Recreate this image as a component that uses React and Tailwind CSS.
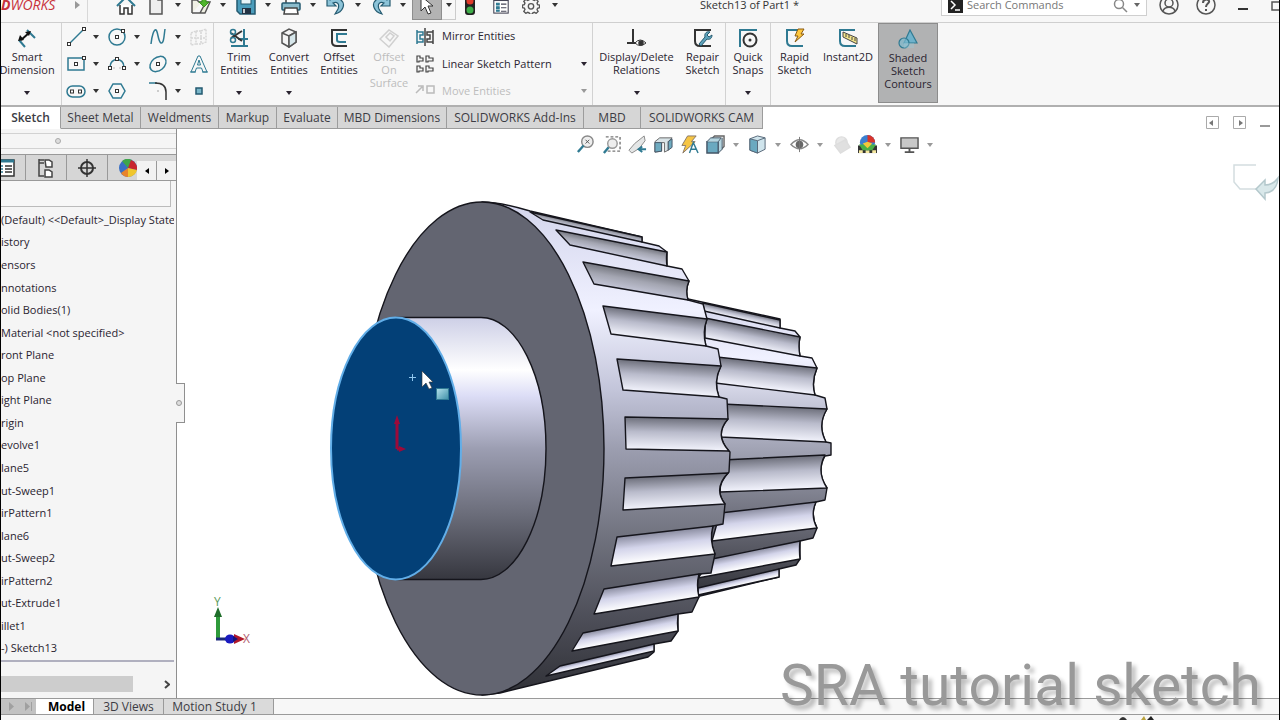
import clsx from "clsx";

const EDGE = "#15151c";
const TEAL = "#2f7a92";

// Small filled triangle used for every drop-down
function Caret({ label = "More options", className }) {
  return (
    <button type="button" aria-label={label} className={clsx("flex items-center justify-center", className)}>
      <svg width="6" height="4" viewBox="0 0 6 4" fill="currentColor">
        <path d="M0 0h6L3 4z" />
      </svg>
    </button>
  );
}

function Icon({ size = 20, children }) {
  return (
    <svg
      width={size}
      height={size}
      viewBox="0 0 20 20"
      fill="none"
      stroke={TEAL}
      strokeWidth="1.5"
      className="shrink-0"
      aria-hidden="true"
    >
      {children}
    </svg>
  );
}

// Square handle drawn on sketch points
function Node({ x, y }) {
  return <rect x={x - 1.5} y={y - 1.5} width="3" height="3" fill="#fff" stroke="#333" strokeWidth="1" />;
}

const quickIcons = {
  home: (
    <g stroke="#333">
      <path d="M4 10v9h4v-6h4v6h4v-9" fill="#fff" />
      <path d="M1 11l9-9 9 9" stroke={TEAL} strokeWidth="2" />
    </g>
  ),
  file: (
    <g stroke="#555">
      <path d="M4 1h9l3 3v15H4z" fill="#eee" />
      <path d="M12 1v4h4" />
    </g>
  ),
  open: (
    <g stroke="#555">
      <path d="M1 18V5h5l2 2h3M1 18h13l5-11h-4L9 18" fill="#f0f0e4" />
      <path d="M11 1h4v6h3l-5 5-5-5h3z" fill="#4fb52c" stroke="#3b8f20" strokeWidth="1" />
    </g>
  ),
  save: (
    <g>
      <path d="M1 2h18v17H4l-3-3z" fill="#4b9cbb" stroke="#245a70" />
      <rect x="5" y="2" width="10" height="7" fill="#e8f4f8" stroke="#245a70" strokeWidth="1" />
      <rect x="6" y="13" width="9" height="6" fill="#234" stroke="none" />
      <path d="M8 14v4" stroke="#fff" />
    </g>
  ),
  print: (
    <g stroke="#444">
      <path d="M5 8V1h10v7" fill="#fff" />
      <rect x="1" y="8" width="18" height="7" rx="1" fill="#8bbccc" stroke="#245a70" />
      <path d="M4 13h12l1 6H3z" fill="#fff" />
    </g>
  ),
  undo: (
    <path d="M1 2v9h9L7 8c4-2 7 1 5 6l-3 5c8-2 11-10 6-14-3-3-8-3-11 0z" fill="#8cc3d8" stroke="#245a70" strokeWidth="1.2" />
  ),
  redo: (
    <path d="M19 2v9h-9l3-3c-4-2-7 1-5 6l3 5C3 17 0 9 5 5c3-3 8-3 11 0z" fill="#8cc3d8" stroke="#245a70" strokeWidth="1.2" />
  ),
  light: (
    <g stroke="none">
      <rect x="5" y="0" width="10" height="20" rx="3" fill="#222" />
      <circle cx="10" cy="6" r="3.5" fill="#e03a2a" />
      <circle cx="10" cy="15" r="3.5" fill="#3fae49" />
    </g>
  ),
  list: (
    <g stroke="#445" strokeWidth="1.2">
      <rect x="2" y="1" width="16" height="18" fill="#fff" />
      <path d="M2 5h16" />
      <path d="M5 8h3v2H5zM5 12h3v2H5zM5 16h3v1H5z" fill={TEAL} stroke={TEAL} />
      <path d="M10 9h6M10 13h6M10 17h6" />
    </g>
  ),
  gear: (
    <g stroke="#555">
      <path d="M8.4 2h3.2l.5 2.2 1.6.7 2-1.2 2.2 2.3-1.2 1.9.6 1.6 2.2.5v3l-2.2.6-.6 1.5 1.2 2-2.2 2.2-2-1.2-1.6.6-.5 1.5H8.4l-.5-1.5-1.6-.6-2 1.2L2 17l1.300-2-.7-1.500L.5 13v-3l2.100-.5.7-1.600L2 6l2.300-2.300 2 1.200 1.600-.7z" />
      <circle cx="10" cy="11.500" r="3" />
    </g>
  ),
};

const sketchTools = [
  {
    name: "Line",
    menu: true,
    art: (
      <>
        <path d="M3 17L17 3" />
        <Node x={3} y={17} />
        <Node x={18} y={2} />
      </>
    ),
  },
  {
    name: "Circle",
    menu: true,
    art: (
      <>
        <circle cx="10" cy="10" r="8" />
        <Node x={10} y={10} />
        <Node x={16} y={4} />
      </>
    ),
  },
  { name: "Spline", menu: true, art: <path d="M3 17C4 8 6 2 8 3s2 12 5 13 3-8 4-14" /> },
  {
    name: "Plane",
    art: <path d="M2 6l5-2v13l-5 1zM7 4h5v13H7M12 4l5-2v13l-5 2M2 11h15" stroke="#d6d6d6" strokeDasharray="2 1" />,
  },
  {
    name: "Corner Rectangle",
    menu: true,
    art: (
      <>
        <rect x="2" y="4" width="16" height="12" />
        <Node x={10} y={10} />
        <Node x={18} y={4} />
      </>
    ),
  },
  {
    name: "Arc",
    menu: true,
    art: (
      <>
        <path d="M3 13c0-10 14-10 14 0" />
        <path d="M6 14h2M12 14h2" stroke="#bbb" strokeWidth="1" />
        <Node x={10} y={5} />
        <Node x={3} y={14} />
        <Node x={17} y={14} />
      </>
    ),
  },
  {
    name: "Ellipse",
    menu: true,
    art: (
      <>
        <ellipse cx="10" cy="10" rx="9" ry="6.500" transform="rotate(-40 10 10)" />
        <Node x={10} y={10} />
      </>
    ),
  },
  {
    name: "Sketch Text",
    art: <path d="M2 18L9 2h2l7 16h-4l-1.500-4h-5L6 18zM8.500 11h3L10 6zM1 18h6M13 18h6" strokeWidth="1" />,
  },
  {
    name: "Slot",
    menu: true,
    art: (
      <>
        <rect x="1" y="5" width="18" height="11" rx="5.500" />
        <Node x={6} y={10.5} />
        <Node x={14} y={10.5} />
      </>
    ),
  },
  {
    name: "Polygon",
    art: (
      <>
        <path d="M6 3h8l4 7-4 7H6l-4-7z" />
        <Node x={10} y={10} />
      </>
    ),
  },
  {
    name: "Fillet",
    menu: true,
    art: (
      <>
        <path d="M1 2h8" />
        <path d="M7 2c8 0 11 4 11 9v8" stroke="#333" />
        <path d="M9 9l2 2M11 9l-2 2" stroke="#ccc" strokeWidth="1" />
      </>
    ),
  },
  { name: "Point", art: <rect x="7" y="7" width="6" height="6" fill="#7ab6c9" stroke="#245a70" /> },
];

const bigIcons = {
  dimension: (
    <>
      <path d="M2 12l6 7M10 2l8 8" strokeWidth="2" />
      <path d="M4 12l8-7" stroke="#111" strokeWidth="2" />
      <path d="M1 13l2-6 4 5zM14 3l-6 1 4 4z" fill="#111" stroke="none" />
    </>
  ),
  trim: (
    <>
      <path d="M9 11h10M15 1v18" strokeWidth="2" />
      <path d="M2 5l11 8M2 10l11-7" stroke="#333" strokeWidth="2" />
      <circle cx="4" cy="4" r="2.500" />
      <circle cx="4" cy="12" r="2.500" />
      <path d="M2 18h17" strokeWidth="2" />
    </>
  ),
  convert: (
    <g stroke="#555">
      <path d="M3 5l7-4 7 3v10l-7 5-7-4z" fill="#f5f5f5" />
      <path d="M3 5l7 3 7-4M10 8v11" />
      <path d="M10 8l7-4v10l-7 5z" fill="#d6e6ea" />
    </g>
  ),
  offset: (
    <>
      <path d="M18 2H3v12q0 4 5 4h10" stroke="#333" strokeWidth="2" />
      <path d="M18 6H8v6q0 2 3 2h6" strokeWidth="2" />
    </>
  ),
  surface: (
    <g stroke="#d0d0d0">
      <path d="M1 11l9-9 9 6-9 11z" />
      <path d="M7 9l4-4 4 3-4 5z" />
    </g>
  ),
  relations: (
    <g stroke="#333">
      <path d="M6 1v14M0 15h10" strokeWidth="2" />
      <path d="M8 15q5-6 11 0-6 5-11 0z" fill="#fff" strokeWidth="1" />
      <circle cx="14" cy="15" r="2" fill="#333" />
    </g>
  ),
  repair: (
    <>
      <path d="M18 2H2v11q0 5 5 5h11" stroke="#333" strokeWidth="2" />
      <path d="M6 16l6-7c-1-4 2-6 5-5l-3 3 2 2 3-2c0 4-3 5-5 4l-6 7z" fill="#5fa3bb" stroke="#245a70" strokeWidth="1" />
    </>
  ),
  snaps: (
    <>
      <path d="M2 19V2h17" strokeWidth="2" />
      <circle cx="12" cy="12" r="6.500" stroke="#333" strokeWidth="2" />
      <circle cx="12" cy="12" r="1.500" fill="#333" stroke="none" />
    </>
  ),
  rapid: (
    <>
      <path d="M13 2H2v11q0 5 5 5h11" strokeWidth="2" />
      <path d="M13 1h6l-3 5h3l-9 8 3-6h-3z" fill="#ffc83d" stroke="#8a5a12" strokeWidth="1" />
    </>
  ),
  instant: (
    <>
      <path d="M17 2H2v11q0 5 5 5h11" strokeWidth="2" />
      <path d="M5 4l14 6v6L5 9z" fill="#f3e58a" stroke="#444" strokeWidth="1" />
      <path d="M8 6v3M11 7v3M14 9v3M17 10v3" stroke="#444" strokeWidth="1" />
    </>
  ),
  shaded: (
    <g strokeWidth="1.200">
      <path d="M12 1l7 13H6z" fill="#6fb2cb" />
      <circle cx="6" cy="14" r="5" fill="#7cb9cf" fillOpacity=".7" />
      <path d="M6 14h10v5H6z" fill="#9bc8d7" fillOpacity=".4" stroke="none" />
    </g>
  ),
};

function RibbonButton({ icon, lines, menu, disabled, className }) {
  return (
    <div className={clsx("flex shrink-0 flex-col items-center pt-[5px]", className, disabled ? "text-[#bdbdbd]" : "text-[#2a2430]")}>
      <button type="button" disabled={disabled} className="flex flex-col items-center gap-0.5 leading-[13px] whitespace-nowrap">
        <Icon>{bigIcons[icon]}</Icon>
        <span className="text-center">
          {lines.map((line) => (
            <span key={line} className="block">{line}</span>
          ))}
        </span>
      </button>
      {menu && <Caret label={`${lines.join(" ")} menu`} className="mt-auto h-6 w-4" />}
    </div>
  );
}

function Separator() {
  return <div className="w-px shrink-0 self-stretch bg-[#d2d2d2]" />;
}

function TitleBar() {
  const files = [
    ["file", "New"],
    ["open", "Open"],
    ["save", "Save"],
    ["print", "Print"],
    ["undo", "Undo"],
    ["redo", "Redo"],
  ];

  return (
    <header className="flex h-[23px] shrink-0 items-end overflow-hidden border-b border-[#cfcfcf] bg-[#f7f7f7] text-[11px] font-medium">
      <div className="flex h-[34px] w-full items-center">
        <div className="w-[67px] shrink-0 text-sm font-normal text-[#c8323c] italic">
          <b>D</b>WORKS
        </div>
        <div className="flex h-full w-5 shrink-0 items-center justify-center border-r border-[#d8d8d8]">
          <svg width="5" height="8" viewBox="0 0 5 8" fill="#999"><path d="M0 0v8l5-4z" /></svg>
        </div>
        <button type="button" aria-label="Home" className="ml-7 shrink-0">
          <Icon>{quickIcons.home}</Icon>
        </button>
        <div className="ml-2.5 flex shrink-0">
          {files.map(([key, label]) => (
            <div key={key} className="flex w-[45px] items-center gap-1">
              <button type="button" aria-label={label}><Icon>{quickIcons[key]}</Icon></button>
              <Caret label={`${label} menu`} className="w-4 text-[#333]" />
            </div>
          ))}
        </div>
        <div className="-ml-1 flex h-[30px] shrink-0">
          <button type="button" aria-label="Select" className="flex w-[30px] items-center justify-center border border-[#8e8e8e] bg-[#b3b3b3]">
            <svg width="14" height="20" viewBox="0 0 14 20" fill="#fff" stroke="#333">
              <path d="M1 1v15l4-4 3 7 3-1-3-7h5z" />
            </svg>
          </button>
          <Caret label="Select menu" className="w-3.5 border border-l-0 border-[#ccc] text-[#333]" />
        </div>
        <div className="ml-1 flex shrink-0 items-center gap-3">
          <button type="button" aria-label="Rebuild"><Icon>{quickIcons.light}</Icon></button>
          <button type="button" aria-label="File Properties"><Icon size={18}>{quickIcons.list}</Icon></button>
          <button type="button" aria-label="Options"><Icon size={18}>{quickIcons.gear}</Icon></button>
          <Caret label="Options menu" className="text-[#333]" />
        </div>
        <h1 className="flex-1 text-center whitespace-nowrap text-[#333]">Sketch13 of Part1 *</h1>
        <div className="flex h-[22px] w-[206px] shrink-0 items-center border border-[#cfcfcf] bg-white px-1.5">
          <svg width="15" height="15" viewBox="0 0 15 15" fill="none" stroke="#fff" strokeWidth="1.500">
            <path d="M0 0h15v15H0z" fill="#222" stroke="none" />
            <path d="M3 3l4 4-4 4M7 12h5" />
          </svg>
          <input
            type="search"
            aria-label="Search Commands"
            placeholder="Search Commands"
            className="ml-1 w-0 flex-1 bg-transparent placeholder:text-[#777]"
          />
          <button type="button" aria-label="Search">
            <svg width="15" height="15" viewBox="0 0 15 15" fill="none" stroke="#888" strokeWidth="1.500">
              <circle cx="6" cy="6" r="4.500" />
              <path d="M9.500 9.500L14 14" />
            </svg>
          </button>
          <Caret label="Search menu" className="ml-1.5 text-[#666]" />
        </div>
        <div className="ml-3 flex shrink-0 items-center gap-[17px]">
          <button type="button" aria-label="Login">
            <Icon><g stroke="#555"><circle cx="10" cy="10" r="9" /><circle cx="10" cy="8" r="4" /><path d="M4 16c2-5 10-5 12 0" /></g></Icon>
          </button>
          <button type="button" aria-label="Help">
            <Icon><g stroke="#555"><circle cx="10" cy="10" r="9" /><path d="M7 8c0-5 7-4 6-1-1 2-3 2-3 5M10 14v2" strokeWidth="2" /></g></Icon>
          </button>
          <button type="button" aria-label="Minimize">
            <Icon><path d="M5 14h10" stroke="#333" strokeWidth="2" /></Icon>
          </button>
        </div>
        <button type="button" aria-label="Maximize" className="ml-[18px] w-2 shrink-0 overflow-hidden">
          <svg width="14" height="14" viewBox="0 0 14 14" fill="none" stroke="#555" strokeWidth="1.500"><path d="M1 4h9v8H1z" /></svg>
        </button>
      </div>
    </header>
  );
}

function Ribbon() {
  return (
    <section
      aria-label="Sketch commands"
      className="flex h-[84px] shrink-0 overflow-hidden border-b-2 border-[#b0b0b0] bg-[#f7f7f7] text-[11px] font-medium"
    >
      <RibbonButton icon="dimension" lines={["Smart", "Dimension"]} menu className="-ml-2 w-[68px]" />
      <Separator />
      <div className="grid shrink-0 grid-cols-[41px_41px_41px_26px] grid-rows-3 pl-0.5">
        {sketchTools.map((tool) => (
          <div key={tool.name} className="flex items-center gap-1 pl-0.5">
            <button type="button" aria-label={tool.name}><Icon>{tool.art}</Icon></button>
            {tool.menu && <Caret label={`${tool.name} menu`} className="w-3 text-[#333]" />}
          </div>
        ))}
      </div>
      <Separator />
      <RibbonButton icon="trim" lines={["Trim", "Entities"]} menu className="w-[50px]" />
      <RibbonButton icon="convert" lines={["Convert", "Entities"]} menu className="w-[50px]" />
      <RibbonButton icon="offset" lines={["Offset", "Entities"]} className="w-[50px]" />
      <RibbonButton icon="surface" lines={["Offset", "On", "Surface"]} disabled className="w-[50px]" />
      <div className="grid w-[178px] shrink-0 grid-rows-3 pl-px text-[#2a2430]">
        <button type="button" className="flex items-center gap-[7px]">
          <Icon>
            <path d="M2 3v14M2 5h6v3H5v4h3v3H2" />
            <path d="M10 1v18M18 3v14M18 5h-6v3h3v4h-3v3h6" stroke="#444" />
          </Icon>
          Mirror Entities
        </button>
        <div className="flex items-center">
          <button type="button" className="flex flex-1 items-center gap-[7px]">
            <Icon>
              <g stroke="#444" strokeWidth="1.200">
                <path d="M2 2v6h2V7h4V4H5V2zM11 2v6h2V7h5V4h-4V2zM2 12v6h2v-1h4v-3H5v-2zM11 12v6h2v-1h5v-3h-4v-2z" />
              </g>
            </Icon>
            Linear Sketch Pattern
          </button>
          <Caret label="Linear Sketch Pattern menu" className="w-4" />
        </div>
        <div className="flex items-center text-[#bdbdbd]">
          <button type="button" disabled className="flex flex-1 items-center gap-[7px]">
            <Icon><g stroke="#bbb"><path d="M1 12l6-6M3 5h5v5M12 5h7v7h-7z" /></g></Icon>
            Move Entities
          </button>
          <Caret label="Move Entities menu" className="w-4 text-[#999]" />
        </div>
      </div>
      <Separator />
      <RibbonButton icon="relations" lines={["Display/Delete", "Relations"]} menu className="w-[87px]" />
      <RibbonButton icon="repair" lines={["Repair", "Sketch"]} className="w-[45px]" />
      <Separator />
      <RibbonButton icon="snaps" lines={["Quick", "Snaps"]} menu className="w-[44px]" />
      <Separator />
      <RibbonButton icon="rapid" lines={["Rapid", "Sketch"]} className="w-[47px]" />
      <RibbonButton icon="instant" lines={["Instant2D"]} className="w-[60px]" />
      <RibbonButton
        icon="shaded"
        lines={["Shaded", "Sketch", "Contours"]}
        className="mb-0.5 w-[60px] border border-[#8c8c8c] bg-[#b1b2b3]"
      />
    </section>
  );
}

const commandTabs = [
  ["Sketch", "w-[60px]"],
  ["Sheet Metal", "w-[80px]"],
  ["Weldments", "w-[78px]"],
  ["Markup", "w-[58px]"],
  ["Evaluate", "w-[61px]"],
  ["MBD Dimensions", "w-[109px]"],
  ["SOLIDWORKS Add-Ins", "w-[137px]"],
  ["MBD", "w-[57px]"],
  ["SOLIDWORKS CAM", "w-[122px]"],
];

function CommandTabs() {
  return (
    <div className="flex h-[22px] shrink-0 bg-white">
      <div role="tablist" className="flex text-[#3c3c44]">
        {commandTabs.map(([name, width], i) => (
          <button
            key={name}
            type="button"
            role="tab"
            aria-selected={i === 0}
            className={clsx(
              "border-r border-b border-[#9c9c9c] whitespace-nowrap",
              width,
              i === 0 ? "border-b-white bg-white font-semibold" : "bg-[#d6d6d6]"
            )}
          >
            {name}
          </button>
        ))}
      </div>
      <div className="mr-2 ml-auto flex items-center gap-3 pt-2">
        {["M8 5v6L4 8z", "M7 5v6l4-3z"].map((d, i) => (
          <button key={d} type="button" aria-label={i ? "Next pane" : "Previous pane"}>
            <svg width="15" height="15" viewBox="0 0 15 15" fill="none" stroke="#aaa">
              <path d="M1.500 1.500h12v12h-12z" />
              <path d={d} fill="#777" stroke="none" />
            </svg>
          </button>
        ))}
        <button type="button" aria-label="Minimize document">
          <svg width="12" height="12" viewBox="0 0 12 12" stroke="#999" strokeWidth="2"><path d="M1 10h10" /></svg>
        </button>
      </div>
    </div>
  );
}

const treeItems = [
  "(Default) <<Default>_Display State",
  "istory",
  "ensors",
  "nnotations",
  "olid Bodies(1)",
  "Material <not specified>",
  "ront Plane",
  "op Plane",
  "ight Plane",
  "rigin",
  "evolve1",
  "lane5",
  "ut-Sweep1",
  "irPattern1",
  "lane6",
  "ut-Sweep2",
  "irPattern2",
  "ut-Extrude1",
  "illet1",
  "-) Sketch13",
];

function FeatureTree() {
  const tab = "flex items-center justify-center border-r border-[#999]";

  return (
    <aside className="relative z-10 flex w-[176px] shrink-0 flex-col border-r border-[#8f8f8f] bg-[#f5f5f5]">
      <div className="mt-1 flex h-4 items-center border-y border-[#d2d2d2] pl-[54px]">
        <span className="size-1.5 rounded-full border border-[#aaa] bg-[#ddd]" />
      </div>
      <div className="mt-[5px] flex h-[27px] border-y border-[#999] bg-[#d6d6d6]">
        <button type="button" aria-label="Feature list" className={clsx(tab, "w-[25px] justify-start overflow-hidden")}>
          <svg width="14" height="18" viewBox="0 0 14 18" fill="none" stroke="#333" strokeWidth="1.500" className="shrink-0">
            <path d="M0 1h13v16H0" fill="#fff" />
            <path d="M0 2h13" stroke={TEAL} strokeWidth="3" />
            <path d="M0 7h2M0 10h2M0 13h2" stroke={TEAL} />
            <path d="M4 7h7M4 10h7M4 13h7" />
          </svg>
        </button>
        <button type="button" aria-label="Configurations" className={clsx(tab, "w-[41px]")}>
          <Icon>
            <g stroke="#444">
              <path d="M3 1v17h5M3 5h5M3 2h5" />
              <path d="M9 2h4l3 2v5h-6zM9 12h4l3 2v5h-7z" fill="#fff" />
            </g>
          </Icon>
        </button>
        <button type="button" aria-label="Dimensions" className={clsx(tab, "w-[41px]")}>
          <Icon>
            <g stroke="#333">
              <circle cx="10" cy="10" r="6" strokeWidth="2" />
              <path d="M10 1v18M1 10h18" />
            </g>
          </Icon>
        </button>
        <button type="button" aria-label="Appearances" className="flex w-[29px] items-center justify-end overflow-hidden">
          <svg width="18" height="18" viewBox="0 0 18 18" className="shrink-0">
            <circle cx="9" cy="9" r="9" fill="#3a6fc4" />
            <path d="M9 9L3 2a9 9 0 0 1 10-1z" fill="#3fa64a" />
            <path d="M9 9l3-8a9 9 0 0 1 6 10z" fill="#c9252f" />
            <path d="M9 9l9 2a9 9 0 0 1-9 7z" fill="#f0c62d" />
            <path d="M9 9v9a9 9 0 0 1-7-4z" fill="#e8842b" />
          </svg>
        </button>
        <div className="mt-1.5 flex flex-1 bg-[#f2f2f2] text-black">
          <button type="button" aria-label="Scroll tabs left" className={clsx(tab, "w-5")}>
            <svg width="4" height="6" viewBox="0 0 4 6"><path d="M4 0v6L0 3z" /></svg>
          </button>
          <button type="button" aria-label="Scroll tabs right" className="flex flex-1 items-center justify-center">
            <svg width="4" height="6" viewBox="0 0 4 6"><path d="M0 0v6l4-3z" /></svg>
          </button>
        </div>
      </div>
      <input type="text" aria-label="Filter" className="mr-[5px] h-[26px] shrink-0 border-r border-b border-[#bbb] bg-[#f7f7f7]" />
      <ul className="mr-0.5 flex flex-1 flex-col overflow-hidden pt-0.5 text-[11px] font-medium text-[#2a2430]">
        {treeItems.map((item) => (
          <li key={item} className="flex flex-1 items-center whitespace-nowrap">{item}</li>
        ))}
      </ul>
      <div className="mr-0.5 mb-3.5 h-0.5 shrink-0 bg-[#b0b0bf]" />
      <div className="mb-1.5 flex h-4 shrink-0 items-center">
        <div className="h-full w-[132px] bg-[#cdcdcd]" />
        <button type="button" aria-label="Scroll right" className="ml-auto pr-1.5">
          <svg width="6" height="9" viewBox="0 0 6 9" fill="none" stroke="#444" strokeWidth="2"><path d="M1 1l4 3.500L1 8" /></svg>
        </button>
      </div>
      <button
        type="button"
        aria-label="Collapse panel"
        className="absolute top-[254px] -right-[9px] flex h-10 w-[9px] items-center border border-l-0 border-[#8f8f8f] bg-[#f5f5f5]"
      >
        <span className="size-1.5 rounded-full border border-[#999] bg-[#ddd]" />
      </button>
    </aside>
  );
}

const viewTools = [
  {
    name: "Zoom to Fit",
    art: <><circle cx="12" cy="7" r="6" fill="#eee" stroke="#888" /><path d="M8 11l-6 7" stroke={TEAL} strokeWidth="2.500" /><path d="M10 5l4 4M14 5l-4 4" stroke="#555" strokeWidth="1" /></>,
  },
  {
    name: "Zoom to Area",
    art: <><path d="M4 2h15v15H6" stroke="#777" strokeDasharray="3 2" /><circle cx="11" cy="9" r="5" fill="#eee" stroke="#999" /><path d="M7 13l-5 6" stroke={TEAL} strokeWidth="2.500" /></>,
  },
  {
    name: "Previous View",
    art: <><path d="M17 1L7 9l-6 7 3 3 8-5 6-8z" fill="#e4e6e6" stroke="#888" strokeWidth="1" /><path d="M19 15h-7M15 12l-4 3 4 3" stroke={TEAL} strokeWidth="2" /></>,
  },
  {
    name: "Section View",
    art: <><path d="M1 7l5-4h13l-4 4v9l-4 2V8H8v9l-7 1z" fill="#d9e4e8" stroke="#666" strokeWidth="1" /><path d="M1 8h7v9l-7 1zM15 7l4-3v9l-4 3z" fill="#6eabc0" stroke="#456" strokeWidth="1" /></>,
  },
  {
    name: "Dynamic Annotation",
    art: <><path d="M8 1h9l-5 6h4L3 19l3-8H2z" fill="#f6c544" stroke="#876" strokeWidth="1" /><path d="M10 19l4-11 5 11M12 15h5" stroke={TEAL} strokeWidth="1.500" /></>,
  },
  {
    name: "View Orientation",
    menu: true,
    art: <><path d="M5 5l4-4h10v11l-4 4" fill="#eee" stroke="#666" /><path d="M1 7h12v12H1z" fill="#6aa9c0" stroke="#456" /><path d="M1 7l4-4h11l-3 4M13 7v12l4-4V3" fill="#b5d5e0" stroke="#456" strokeWidth="1" /></>,
  },
  {
    name: "Display Style",
    menu: true,
    art: <><path d="M2 4l8-3 8 2v12l-8 4-8-3z" fill="#cfe4ec" stroke="#567" strokeWidth="1" /><path d="M2 4l8 2v13l-8-3z" fill="#6aa9c0" stroke="#567" strokeWidth="1" /><path d="M10 6l8-3" stroke="#567" strokeWidth="1" /></>,
  },
  {
    name: "Hide/Show Items",
    menu: true,
    art: <><path d="M1 10q9-10 18 0-9 9-18 0z" fill="#fff" stroke="#888" /><circle cx="10" cy="10" r="4" fill="#666" stroke="none" /><path d="M10 2v16" stroke="#777" strokeWidth="1" /></>,
  },
  {
    name: "Edit Appearance",
    art: <g stroke="#ddd"><circle cx="10" cy="8" r="6" fill="#e8e8e8" /><path d="M3 11l6 8 10-6-5-8z" fill="#e0e0e0" /></g>,
  },
  {
    name: "Apply Scene",
    menu: true,
    art: (
      <g stroke="none">
        <path d="M0 11h20v8H0z" fill="#333" />
        <path d="M1 16h4v3H1zM8 16h4v3H8zM15 16h4v3h-4z" fill="#f6e9a0" />
        <circle cx="10" cy="8" r="8" fill="#3b7fd0" />
        <path d="M10 8V0a8 8 0 0 1 8 8z" fill="#d8342b" />
        <path d="M1 10h18l-4 6H5z" fill="#49b046" />
        <path d="M10 7l5 2-5 5-5-5z" fill="#f2c838" />
      </g>
    ),
  },
  {
    name: "View Settings",
    menu: true,
    art: <g stroke="#555"><path d="M1 3h18v11H1z" fill="#c8c8c8" /><path d="M10 14v4M5 18h10" strokeWidth="2" /></g>,
  },
];

// Groove outlines: top-left, top-right, bottom-right, bottom-left, plus x of the concave end
const largeGrooves = [
  [530, 212, 642, 237, 642, 242, 543, 220, 642],
  [556, 230, 667, 252, 667, 266, 570, 245, 666],
  [583, 262, 689, 281, 688, 300, 594, 284, 685],
  [603, 306, 707, 319, 706, 346, 611, 334, 702],
  [617, 359, 721, 366, 719, 397, 623, 390, 713],
  [625, 417, 728, 419, 729, 451, 626, 449, 714],
  [625, 478, 728, 473, 725, 504, 623, 510, 713],
  [617, 537, 713, 526, 715, 554, 611, 566, 709],
  [604, 589, 699, 574, 699, 597, 594, 614, 696],
  [583, 633, 678, 614, 678, 631, 572, 651, 677],
  [560, 666, 654, 644, 654, 651, 546, 676, 654],
];

const smallGrooves = [
  [703, 303, 780, 320, 780, 328, 704, 311, 780],
  [705, 318, 800, 337, 800, 356, 705, 338, 798],
  [717, 357, 817, 368, 815, 395, 715, 383, 811],
  [722, 404, 827, 409, 826, 442, 720, 437, 817],
  [722, 460, 825, 455, 827, 488, 720, 492, 816],
  [720, 513, 816, 502, 817, 528, 712, 541, 810],
  [712, 559, 800, 541, 800, 559, 698, 578, 799],
  [698, 588, 779, 569, 779, 577, 698, 595, 779],
];

// Upper grooves catch less light than lower ones
const grooveShades = {
  top: ["#74767f", "#a3a5b1", "#c3c5d6"],
  middle: ["#6d6f7b", "#b9bbcb", "#f2f3fc"],
  bottom: ["#8a8ca0", "#d3d4ea", "#ffffff"],
};

// Shading runs across each groove, square to its long edge
function Groove({ points }) {
  const [x1, y1, x2, y2, x3, y3, x4, y4, cx] = points;
  const length = Math.hypot(x2 - x1, y2 - y1);
  const nx = -(y2 - y1) / length;
  const ny = (x2 - x1) / length;
  const depth = (x4 - x1) * nx + (y4 - y1) * ny;
  const shade = grooveShades[y1 < 300 ? "top" : y1 < 500 ? "middle" : "bottom"];
  const id = `groove-${x1}-${y1}`;

  return (
    <>
      <linearGradient
        id={id}
        gradientUnits="userSpaceOnUse"
        x1={x1}
        y1={y1}
        x2={x1 + nx * depth}
        y2={y1 + ny * depth}
      >
        <stop offset="0" stopColor={shade[0]} />
        <stop offset=".45" stopColor={shade[1]} />
        <stop offset="1" stopColor={shade[2]} />
      </linearGradient>
      <path
        d={`M${x1} ${y1}L${x2} ${y2}Q${cx} ${(y2 + y3) / 2} ${x3} ${y3}L${x4} ${y4}Z`}
        fill={`url(#${id})`}
      />
    </>
  );
}

function PartModel() {
  return (
    <svg
      viewBox="320 190 520 510"
      width="520"
      height="510"
      className="absolute top-[61px] left-[143px]"
      role="img"
      aria-label="Gear part with a selected boss face"
    >
      <defs>
        <linearGradient id="land" gradientUnits="userSpaceOnUse" x1="0" y1="202" x2="0" y2="695">
          <stop offset="0" stopColor="#d3d5ec" />
          <stop offset=".22" stopColor="#f0f1ff" />
          <stop offset=".38" stopColor="#c3c5da" />
          <stop offset=".5" stopColor="#9c9eb0" />
          <stop offset=".68" stopColor="#70727e" />
          <stop offset=".85" stopColor="#4c4d57" />
          <stop offset="1" stopColor="#303137" />
        </linearGradient>
        <linearGradient id="landSmall" gradientUnits="userSpaceOnUse" x1="0" y1="299" x2="0" y2="596">
          <stop offset="0" stopColor="#d3d5ec" />
          <stop offset=".2" stopColor="#f0f1ff" />
          <stop offset=".4" stopColor="#b9bbce" />
          <stop offset=".6" stopColor="#8c8e9d" />
          <stop offset=".85" stopColor="#555660" />
          <stop offset="1" stopColor="#303137" />
        </linearGradient>
        <linearGradient id="boss" x1="0" y1="0" x2="0" y2="1">
          <stop offset="0" stopColor="#cdcfe6" />
          <stop offset=".2" stopColor="#fff" />
          <stop offset=".3" stopColor="#dcddf6" />
          <stop offset=".5" stopColor="#9c9eb2" />
          <stop offset=".75" stopColor="#6b6d7a" />
          <stop offset="1" stopColor="#36373f" />
        </linearGradient>
        <linearGradient id="hint" x1="0" y1="0" x2="1" y2="1">
          <stop offset="0" stopColor="#b5e2ec" />
          <stop offset="1" stopColor="#3d8fa8" />
        </linearGradient>
      </defs>
      <g stroke={EDGE} strokeWidth="1.400" strokeLinejoin="round">
        <path
          d="M688 299L780 319V328L795 331 800 337Q798 346 800 356L812 358 817 368Q811 382 815 395L825 398 827 409Q817 425 826 442L831 443V455L825 456Q816 472 827 488L825 500 816 502Q810 515 817 528L813 538 800 541V559L796 565 779 569V577L700 596 660 560V330Z"
          fill="url(#landSmall)"
        />
        {smallGrooves.map((points) => (
          <Groove key={points[1]} points={points} />
        ))}
        <path
          d="M482 202Q500 202 530 211L642 237V242L659 246 667 252V266L682 269 689 281Q685 290 688 300L703 304 707 319Q702 332 706 346L718 349 721 366Q713 382 719 397L727 399 728 419Q714 434 729 451L730 452 729 472Q713 489 725 504L723 524 713 526Q709 540 715 554L711 573 699 574Q696 585 699 597L692 612 678 614V631L671 641 654 644V652L648 657 500 693 482 695Z"
          fill="url(#land)"
        />
        {largeGrooves.map((points) => (
          <Groove key={points[1]} points={points} />
        ))}
        <ellipse cx="482" cy="448.500" rx="122" ry="246.500" fill="#636571" />
        <path d="M396 317.500H481A65 131 0 0 1 481 579.500H396Z" fill="url(#boss)" />
      </g>
      <ellipse cx="396" cy="448.500" rx="65" ry="131" fill="#034077" stroke="#62aee8" strokeWidth="2" />
      <path d="M412.500 374v7M409 377.500h7" stroke="#8fc6ee" />
      <path d="M397 449V424M397 449h5" stroke="#9c0a3a" strokeWidth="3" fill="none" />
      <path d="M397 415l-3 9h6zM406 449l-7-3v6z" fill="#9c0a3a" />
      <path d="M422 371v16l4-4 3 6 3-1-3-6h4z" fill="#fff" stroke="#333" strokeWidth=".6" />
      <rect x="436.500" y="388.500" width="12" height="11" fill="url(#hint)" stroke="#317b95" />
    </svg>
  );
}

// Axis triad in the lower left corner of the canvas
function Triad() {
  return (
    <svg width="44" height="52" viewBox="0 0 44 52" className="absolute bottom-[50px] left-[33px]" fontFamily="Open Sans, sans-serif" fontSize="12">
      <text x="4" y="10" fill="#5a9a5a">Y</text>
      <path d="M8 43V20" stroke="#2e9a3a" strokeWidth="4" />
      <path d="M8 11l-4 10h8z" fill="#1f6e2a" />
      <path d="M6 43h16" stroke="#1c2a7a" strokeWidth="3" />
      <path d="M24 38l11 5-11 5z" fill="#b0182c" />
      <ellipse cx="20" cy="43" rx="5" ry="4.500" fill="#1a1ac0" />
      <path d="M23 40l5 3-5 3z" fill="#15157a" />
      <text x="33" y="47" fill="#b06070">X</text>
    </svg>
  );
}

function Viewport() {
  return (
    <main className="relative min-w-0 flex-1 bg-white">
      <div role="toolbar" aria-label="View" className="flex items-center gap-[7px] pt-1.5 pl-[399px]">
        {viewTools.map((tool) => (
          <div key={tool.name} className="flex items-center">
            <button type="button" aria-label={tool.name}><Icon size={19}>{tool.art}</Icon></button>
            {tool.menu && <Caret label={`${tool.name} menu`} className="w-4 pl-1.5 text-[#999]" />}
          </div>
        ))}
      </div>
      <PartModel />
      <button type="button" aria-label="Exit sketch" className="absolute top-[34px] right-0">
        <svg width="48" height="38" viewBox="0 0 48 38" fill="none" stroke="#d3dde0" strokeWidth="1.500">
          <path d="M25 2H3v17l6 7h16" />
          <path d="M25 26l9-9v5q8 0 13-7-1 14-13 15v6z" fill="#d9e8ea" stroke="#b4c8cc" />
        </svg>
      </button>
      <Triad />
    </main>
  );
}

function BottomBar() {
  return (
    <footer className="shrink-0 bg-[#f7f7f7]">
      <div className="flex h-[17px] border-y border-[#9a9a9a]">
        <div className="flex w-[35px] items-center gap-2 bg-[#c2c2c2] pl-1.5">
          <button type="button" aria-label="Next tab"><svg width="9" height="9" viewBox="0 0 9 9" fill="#a0a0a0"><path d="M2 0v9l5-4.500z" /></svg></button>
          <button type="button" aria-label="Last tab"><svg width="9" height="9" viewBox="0 0 9 9" fill="#a0a0a0"><path d="M1 0v9l5-4.500zM7 0h1v9H7z" /></svg></button>
        </div>
        <div role="tablist" className="flex leading-[15px] text-[#3c3c44]">
          <button type="button" role="tab" aria-selected="true" className="w-[58px] border-r border-[#9a9a9a] bg-white pl-1 font-bold text-black">Model</button>
          <button type="button" role="tab" aria-selected="false" className="w-[70px] border-r border-[#9a9a9a] bg-[#dadada]">3D Views</button>
          <button type="button" role="tab" aria-selected="false" className="w-[110px] border-r border-[#9a9a9a] bg-[#dadada] pr-2">Motion Study 1</button>
        </div>
      </div>
      <div className="flex h-[5px] justify-end overflow-hidden pr-[124px]">
        <svg width="38" height="5" viewBox="0 0 38 5">
          <path d="M2 5q4-6 8 0z" fill="#333" />
          <path d="M24 5l3-4 2 4z" fill="#b9a13a" />
          <path d="M30 5l4-4 3 4z" fill="#222" />
        </svg>
      </div>
    </footer>
  );
}

export default function App() {
  return (
    <div className="relative flex h-screen flex-col overflow-hidden border-x border-black bg-white font-['Open_Sans','Noto_Sans',sans-serif] text-xs">
      <TitleBar />
      <Ribbon />
      <CommandTabs />
      <div className="flex min-h-0 flex-1">
        <FeatureTree />
        <Viewport />
      </div>
      <BottomBar />
      <div className="pointer-events-none absolute right-[18px] bottom-0 font-['Roboto',sans-serif] text-[57px] leading-[68px] whitespace-nowrap text-[#999] [text-shadow:4px_4px_4px_#0004]">
        SRA tutorial sketch
      </div>
    </div>
  );
}
